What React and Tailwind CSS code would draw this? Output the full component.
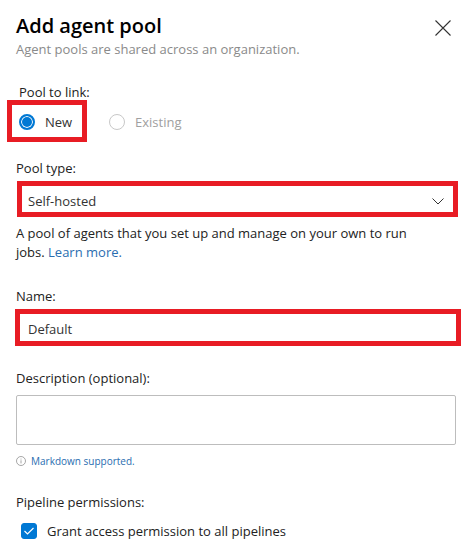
import React, { useState } from 'react';
import clsx from 'clsx';

function Label({ htmlFor, children }) {
  return (
    <label htmlFor={htmlFor} className="block leading-4">
      {children}
    </label>
  );
}

function Radio({ label, value, selected, onChange, disabled }) {
  return (
    <label className={clsx('flex items-center gap-2.5 pt-0.5 leading-5', disabled ? 'text-[#a0a0a0]' : 'text-[#333333]')}>
      <input
        type="radio"
        name="pool"
        value={value}
        checked={selected === value}
        disabled={disabled}
        onChange={() => onChange(value)}
        className="size-4 appearance-none rounded-full border border-[#c8c8c8] bg-white checked:border-2 checked:border-[#0078d4] checked:bg-[#0078d4] checked:shadow-[inset_0_0_0_1px_white]"
      />
      {label}
    </label>
  );
}

export default function App() {
  const [pool, setPool] = useState('new');
  const [poolType, setPoolType] = useState('self');
  const [name, setName] = useState('Default');
  const [description, setDescription] = useState('');
  const [grant, setGrant] = useState(true);

  return (
    <form className="bg-white pt-3 pr-4 pl-4 font-['Open_Sans','Noto_Sans',sans-serif] text-[13px] text-[#222222]">
      <header className="flex items-start justify-between">
        <div>
          <h1 className="text-xl leading-7 font-semibold text-black">Add agent pool</h1>
          <p className="mt-px leading-4 text-[#8a8a8a]">Agent pools are shared across an organization.</p>
        </div>
        <button type="button" aria-label="Close" className="mt-2 mr-[5px] size-4">
          <svg viewBox="0 0 16 16" className="size-4" fill="none" stroke="#333333" strokeWidth="1.1">
            <path d="M0.5 0.5 15.5 15.5M15.5 0.5 0.5 15.5" />
          </svg>
        </button>
      </header>

      <fieldset className="mt-[27px]">
        <legend className="pl-[3px] leading-4">Pool to link:</legend>
        <div className="-ml-[9px] flex items-center gap-[22px]">
          <div className="flex h-[42px] w-20 items-center border-5 border-[#e81c24] pl-[7px]">
            <Radio label="New" value="new" selected={pool} onChange={setPool} />
          </div>
          <Radio label="Existing" value="existing" selected={pool} onChange={setPool} disabled />
        </div>
      </fieldset>

      <div className="mt-[18px]">
        <Label htmlFor="type">Pool type:</Label>
        <div className="relative mt-[5px] -mr-0.5 ml-px">
          <select
            id="type"
            value={poolType}
            onChange={(e) => setPoolType(e.target.value)}
            className="block h-9 w-full appearance-none border-5 border-[#e81c24] bg-white pt-1.5 pl-1.5 text-[#333333] outline-none"
          >
            <option value="self">Self-hosted</option>
          </select>
          <svg
            viewBox="0 0 12 7"
            className="pointer-events-none absolute top-[17px] right-3.5 h-[7px] w-3"
            fill="none"
            stroke="#333333"
          >
            <path d="M0.5 0.5 6 6 11.5 0.5" />
          </svg>
        </div>
        <p className="mt-[7px] pr-6 leading-[19px]">
          A pool of agents that you set up and manage on your own to run jobs.{' '}
          <a href="#" className="text-[#2a6db0]">Learn more.</a>
        </p>
      </div>

      <div className="mt-[26px]">
        <Label htmlFor="name">Name:</Label>
        <div className="mt-[5px] -mr-[5px] -ml-px">
          <input
            id="name"
            type="text"
            value={name}
            onChange={(e) => setName(e.target.value)}
            className="block h-[37px] w-full border-5 border-[#e81c24] pt-0.5 pl-2 text-[#333333] outline-none"
          />
        </div>
      </div>

      <div className="mt-6">
        <Label htmlFor="description">Description (optional):</Label>
        <textarea
          id="description"
          value={description}
          onChange={(e) => setDescription(e.target.value)}
          className="mt-[9px] block h-[50px] w-full resize-none rounded-xs border border-[#bdbdbd] px-2 outline-none"
        />
        <div className="mt-2 flex items-center gap-[5px] text-[10px] leading-4">
          <svg viewBox="0 0 10 10" className="size-2.5" fill="none" stroke="#909090" strokeWidth="0.8">
            <circle cx="5" cy="5" r="4.5" />
            <path d="M5 4.3V7.4M5 2.6V3.5" />
          </svg>
          <a href="#" className="text-[#2a6db0]">Markdown supported.</a>
        </div>
      </div>

      <fieldset className="mt-[25px]">
        <legend className="leading-4">Pipeline permissions:</legend>
        <label className="mt-3 flex items-center gap-2.5 pl-[5px] leading-[18px]">
          <span className="relative size-4">
            <input
              type="checkbox"
              checked={grant}
              onChange={(e) => setGrant(e.target.checked)}
              className="block size-4 appearance-none rounded-[3px] border border-[#bdbdbd] checked:border-[#0078d4] checked:bg-[#0078d4]"
            />
            {grant && (
              <svg
                viewBox="0 0 16 16"
                className="pointer-events-none absolute inset-0 size-4"
                fill="none"
                stroke="white"
                strokeWidth="1.2"
              >
                <path d="M3.5 8 6.5 11 12.5 5" />
              </svg>
            )}
          </span>
          Grant access permission to all pipelines
        </label>
      </fieldset>
    </form>
  );
}
